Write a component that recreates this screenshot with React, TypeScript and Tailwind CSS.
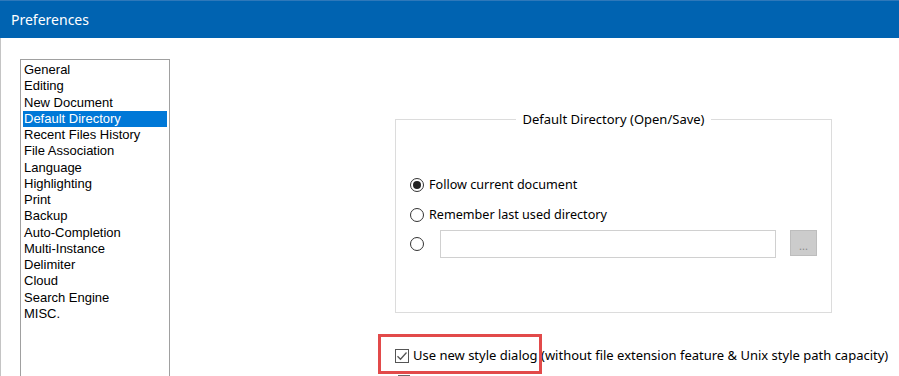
import React from "react";

const pages = [
  "General",
  "Editing",
  "New Document",
  "Default Directory",
  "Recent Files History",
  "File Association",
  "Language",
  "Highlighting",
  "Print",
  "Backup",
  "Auto-Completion",
  "Multi-Instance",
  "Delimiter",
  "Cloud",
  "Search Engine",
  "MISC.",
];

const Radio = ({ checked }: { checked?: boolean }) => (
  <span className="w-[14px] h-[14px] shrink-0 rounded-full border border-[#333] bg-white flex items-center justify-center">
    {checked && <span className="w-[8px] h-[8px] rounded-full bg-[#222]" />}
  </span>
);

const App = () => {
  return (
    <div className="w-[899px] h-[376px] overflow-hidden bg-white flex flex-col font-['Noto_Sans',sans-serif] text-black">
      {/* Title bar */}
      <div className="h-[38px] shrink-0 bg-[#0063b1] border-t border-[#2e78ba] flex items-center pl-[11px] text-white text-[14px]">
        Preferences
      </div>

      <div className="flex flex-1 items-start border-l border-[#c4c4c4] pl-[19px] pt-[21px]">
        {/* Category list */}
        <div className="w-[150px] h-[340px] shrink-0 border border-[#a0a0a0] pt-[2px] px-px font-['Liberation_Sans',sans-serif]">
          {pages.map((p) => (
            <div
              key={p}
              className={
                "h-[16.25px] leading-[16.25px] text-[13px] whitespace-nowrap " +
                (p === "Default Directory"
                  ? "bg-[#0078d7] text-white mx-px pl-px"
                  : "pl-[2px]")
              }
            >
              {p}
            </div>
          ))}
        </div>

        {/* Settings */}
        <div className="ml-[225px] mt-[52px] flex flex-col text-[12.6px]">
          <fieldset className="w-[434px] border border-[#dcdcdc] px-[14px] pt-[50px] pb-[54px]">
            <legend className="mx-auto px-[6px] leading-[16px] text-[13px]">Default Directory (Open/Save)</legend>
            <div className="flex items-center h-[16px] gap-[5px]">
              <Radio checked />
              <span>Follow current document</span>
            </div>
            <div className="flex items-center h-[16px] gap-[5px] mt-[14px]">
              <Radio />
              <span>Remember last used directory</span>
            </div>
            <div className="flex items-center mt-[7px]">
              <Radio />
              <div className="ml-[16px] w-[336px] h-[28px] shrink-0 border border-[#d0d0d0] bg-white" />
              <button className="ml-[14px] w-[27px] h-[26px] shrink-0 -mt-[3px] bg-[#cccccc] border border-[#bdbdbd] text-[#8a8a8a] text-[11px] leading-[26px] pt-[2px]">
                ...
              </button>
            </div>
          </fieldset>

          <div className="relative flex items-center h-[16px] mt-[35px] gap-[4px] text-[13px]">
            <span className="w-[14px] h-[14px] shrink-0 border border-[#555] bg-white flex items-center justify-center">
              <svg width="12" height="12" viewBox="0 0 12 12" fill="none">
                <path d="M1.5 6.2 L4.5 9.2 L10.5 2.5" stroke="#555" strokeWidth="1.3" />
              </svg>
            </span>
            <span className="whitespace-nowrap">
              Use new style dialog (without file extension feature &amp; Unix style path capacity)
            </span>
            <div className="absolute left-[-17px] top-[-14px] w-[164px] h-[40px] border-[3px] border-[#e24a4a]" />
          </div>
          <div className="mt-[11px] ml-[3px] w-[12px] h-[12px] bg-[#6a6a6a]" />
        </div>
      </div>
    </div>
  );
};

export default App;
